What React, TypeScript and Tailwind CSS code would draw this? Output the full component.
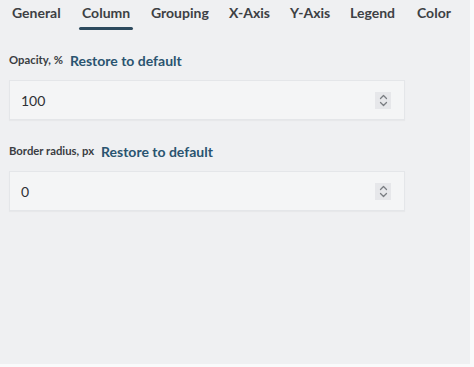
import React from "react";

const tabs: { t: string; w: number }[] = [
  { t: "General", w: 70 },
  { t: "Column", w: 69 },
  { t: "Grouping", w: 78 },
  { t: "X-Axis", w: 61 },
  { t: "Y-Axis", w: 60 },
  { t: "Legend", w: 67 },
  { t: "Color", w: 40 },
];

function Spinner() {
  return (
    <div className="flex h-[17px] w-[16px] items-center justify-center bg-[#e6e7ea]">
      <svg width="9" height="13" viewBox="0 0 9 13" fill="none" stroke="#7a7d82" strokeWidth="1.3" strokeLinecap="round" strokeLinejoin="round">
        <path d="M1.5 4.5 L4.5 1.5 L7.5 4.5" />
        <path d="M1.5 8.5 L4.5 11.5 L7.5 8.5" />
      </svg>
    </div>
  );
}

function Field({ label, value }: { label: string; value: string }) {
  return (
    <div className="flex flex-col">
      <div className="flex h-[22px] items-center gap-[7px]">
        <span className="whitespace-nowrap text-[11.3px] font-bold text-[#3a3d42]">{label}</span>
        <span className="whitespace-nowrap text-[14px] font-bold text-[#2a5470]">Restore to default</span>
      </div>
      <div className="mt-[9px] flex h-[40px] w-[396px] items-center justify-between border border-[#e4e6e9] bg-[#f4f5f6] pl-[11px] pr-[13px] shadow-[0_1px_1px_rgba(0,0,0,0.03)]">
        <span className="text-[14px] text-[#2e3134]">{value}</span>
        <Spinner />
      </div>
    </div>
  );
}

export default function App() {
  return (
    <div
      className="h-[367px] w-[474px] bg-[#f9fafb]"
      style={{ fontFamily: 'Lato, "Noto Sans", sans-serif' }}
    >
      <div className="h-[364px] w-[470px] bg-[#eff0f2]">
        <div className="flex h-[30px] items-start pl-[12px] pt-[3px]">
          {tabs.map(({ t, w }) => (
            <div key={t} className="flex flex-col items-start" style={{ width: w }}>
              <span className="relative whitespace-nowrap text-[14px] font-bold leading-[20px] text-[#3d4044]">
                {t}
                {t === "Column" ? (
                  <span className="absolute left-[-3px] right-[-3px] top-[24px] h-[3px] rounded-full bg-[#2d4a5e]" />
                ) : null}
              </span>
            </div>
          ))}
        </div>
        <div className="flex flex-col gap-[20px] pl-[9px] pt-[19px]">
          <Field label="Opacity, %" value="100" />
          <Field label="Border radius, px" value="0" />
        </div>
      </div>
    </div>
  );
}
